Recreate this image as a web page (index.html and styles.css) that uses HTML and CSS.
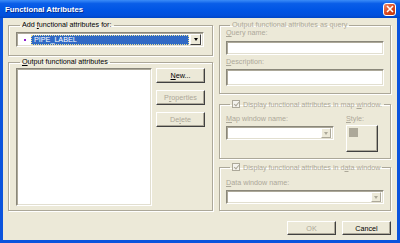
FILE: index.html
```html
<!DOCTYPE html>
<html lang="en">
<head>
  <meta charset="UTF-8" />
  <title>Functional Attributes</title>
  <link rel="stylesheet" href="styles.css">
</head>
<body>
  <div class="window">
    <div class="titlebar">
      <span class="title">Functional Attributes</span>
      <span class="close">
        <svg width="8" height="8" viewBox="0 0 8 8"><path d="M1 1 L7 7 M7 1 L1 7" stroke="#fff" stroke-width="1.6"/></svg>
      </span>
    </div>

    <div class="client">
      <div class="columns">
        <div class="col-left">
          <fieldset class="group g-add">
            <legend>Add <u>f</u>unctional attributes for:</legend>
            <div class="sunken combo">
              <span class="bullet"></span>
              <span class="selected">PIPE_LABEL</span>
              <span class="drop"><i class="arrow"></i></span>
            </div>
          </fieldset>

          <fieldset class="group g-output">
            <legend><u>O</u>utput functional attributes</legend>
            <div class="list-row">
              <div class="sunken listbox"></div>
              <div class="btn-col">
                <button class="btn"><u>N</u>ew...</button>
                <button class="btn" disabled>P<u>r</u>operties</button>
                <button class="btn" disabled>De<u>l</u>ete</button>
              </div>
            </div>
          </fieldset>
        </div>

        <div class="col-right">
          <fieldset class="group g-query">
            <legend class="off">Output functional attributes as query</legend>
            <div class="label off"><u>Q</u>uery name:</div>
            <div class="sunken field"></div>
            <div class="label off"><u>D</u>escription:</div>
            <div class="sunken field tall"></div>
          </fieldset>

          <fieldset class="group g-map">
            <legend class="off"><span class="check"></span>Display functional attributes in map <u>w</u>indow.</legend>
            <div class="map-row">
              <div class="map-name">
                <div class="label off"><u>M</u>ap window name:</div>
                <div class="sunken combo small"><span class="drop flat"><i class="arrow"></i></span></div>
              </div>
              <div class="style-pick">
                <div class="label off"><u>S</u>tyle:</div>
                <div class="style-box"><span class="swatch"></span></div>
              </div>
            </div>
          </fieldset>

          <fieldset class="group g-data">
            <legend class="off"><span class="check"></span>Display functional attributes in d<u>a</u>ta window</legend>
            <div class="label off"><u>D</u>ata window name:</div>
            <div class="sunken combo small"><span class="drop flat"><i class="arrow"></i></span></div>
          </fieldset>
        </div>
      </div>

      <div class="footer">
        <button class="btn wide" disabled>OK</button>
        <button class="btn wide">Cancel</button>
      </div>
    </div>
  </div>
</body>
</html>
```

FILE: styles.css
```css
* {
  box-sizing: border-box;
}

body {
  margin: 0;
  font-family: 'Liberation Sans', Arial, sans-serif;
  font-size: 7.2px;
  color: #000;
}

.window {
  width: 400px;
  height: 243px;
  background-color: #0b54dd;
  display: flex;
  flex-direction: column;
  padding: 0 3px 3px 3px;
}

/* title bar */
.titlebar {
  height: 18px;
  margin: 0 -3px;
  padding: 0 4px 0 5px;
  display: flex;
  align-items: center;
  justify-content: space-between;
  background: linear-gradient(#3b8cf8 0%, #0a5ee8 20%, #0055e5 55%, #0250dc 85%, #0046c6 100%);
}

.title {
  color: #fff;
  font-weight: bold;
  font-size: 7.8px;
  text-shadow: 1px 1px 0 #0a2e8c;
}

.close {
  width: 13px;
  height: 13px;
  border: 1px solid #fff;
  border-radius: 3px;
  background: linear-gradient(135deg, #f08c6c, #d9451c 55%, #c0380f);
  display: flex;
  align-items: center;
  justify-content: center;
}

/* dialog body */
.client {
  flex: 1;
  background-color: #ece9d8;
  padding: 3px 6px 5px 5px;
  display: flex;
  flex-direction: column;
}

.columns {
  display: flex;
  gap: 6px;
}

.col-left {
  flex: none;
  width: 205px;
  display: flex;
  flex-direction: column;
}

.col-right {
  flex: 1;
  min-width: 0;
  display: flex;
  flex-direction: column;
}

.group {
  margin: 0;
  min-width: 0;
  border: 1px solid #aca899;
  box-shadow: inset 1px 1px 0 #fff, 1px 1px 0 #fff;
}

.group legend {
  padding: 0 2px;
  margin-left: 4px;
  line-height: 8px;
  white-space: nowrap;
}

.off {
  color: #aca899;
}

.label {
  line-height: 8px;
}

/* sunken controls */
.sunken {
  background-color: #fff;
  border: 1px solid;
  border-color: #8a877a #fff #fff #8a877a;
  box-shadow: inset 1px 1px 0 #aca899, inset -1px -1px 0 #e2dfd0;
}

.combo {
  height: 15px;
  display: flex;
  align-items: center;
  padding: 2px;
}

.g-add {
  padding: 3px 8px 8px 7px;
}

.bullet {
  width: 2px;
  height: 2px;
  margin: 0 5px 0 5px;
  background-color: #9020d0;
}

.selected {
  flex: 1;
  height: 10px;
  line-height: 8px;
  padding-left: 2px;
  color: #fff;
  background-color: #316ac5;
  border: 1px dotted #e8e29c;
}

.drop {
  width: 11px;
  height: 11px;
  margin-left: 1px;
  background-color: #ece9d8;
  border: 1px solid;
  border-color: #fff #404040 #404040 #fff;
  display: flex;
  align-items: center;
  justify-content: center;
}

.arrow {
  width: 0;
  height: 0;
  border-left: 2.5px solid transparent;
  border-right: 2.5px solid transparent;
  border-top: 3px solid #000;
}

.combo.small {
  height: 14px;
  justify-content: flex-end;
  padding: 2px;
}

.drop.flat {
  width: 10px;
  height: 10px;
  border-color: #fff #aca899 #aca899 #fff;
}

.drop.flat .arrow {
  border-top-color: #aca899;
}

/* output list */
.g-output {
  flex: 1;
  margin-top: 2px;
  padding: 2px 7px 4px 7px;
  display: flex;
  flex-direction: column;
}

.list-row {
  flex: 1;
  display: flex;
  gap: 4px;
}

.listbox {
  flex: 1;
}

.btn-col {
  width: 49px;
  display: flex;
  flex-direction: column;
  gap: 7px;
}

.btn {
  height: 15px;
  padding: 0;
  font-family: inherit;
  font-size: 7.2px;
  color: #000;
  background-color: #ece9d8;
  border: 1px solid;
  border-color: #fff #404040 #404040 #fff;
  box-shadow: inset -1px -1px 0 #aca899;
}

.btn:disabled {
  color: #aca899;
}

/* right groups */
.g-query {
  padding: 0 6px 7px 6px;
}

.g-query .label + .field {
  margin-top: 4px;
}

.g-query .field + .label {
  margin-top: 3px;
}

.field {
  height: 14px;
}

.field.tall {
  height: 17px;
}

.g-query .field.tall {
  margin-top: 3px;
}

.g-map {
  margin-top: 6px;
  padding: 6px 12px 6px 6px;
}

.check {
  display: inline-block;
  vertical-align: -1px;
  width: 8px;
  height: 8px;
  margin-right: 3px;
  border: 1px solid #aca899;
  background-color: #f4f3ee;
  position: relative;
}

.check::after {
  content: '';
  position: absolute;
  left: 2px;
  top: 0;
  width: 2px;
  height: 4px;
  border: solid #aca899;
  border-width: 0 1.3px 1.3px 0;
  transform: rotate(40deg);
}

.map-row {
  display: flex;
  justify-content: space-between;
}

.map-name {
  width: 108px;
}

.map-name .combo {
  margin-top: 3px;
}

.style-pick {
  width: 32px;
}

.style-box {
  margin-top: 2px;
  height: 27px;
  background-color: #ece9d8;
  border: 1px solid;
  border-color: #fff #404040 #404040 #fff;
  box-shadow: inset -1px -1px 0 #aca899;
  padding: 2px;
}

.swatch {
  display: block;
  width: 9px;
  height: 9px;
  background-color: #aca899;
}

.g-data {
  flex: 1;
  margin-top: 4px;
  padding: 7px 6px 6px 6px;
}

.g-data .combo {
  margin-top: 3px;
}

/* footer */
.footer {
  margin-top: auto;
  display: flex;
  justify-content: flex-end;
  gap: 6px;
}

.btn.wide {
  width: 49px;
  height: 14px;
}
```
